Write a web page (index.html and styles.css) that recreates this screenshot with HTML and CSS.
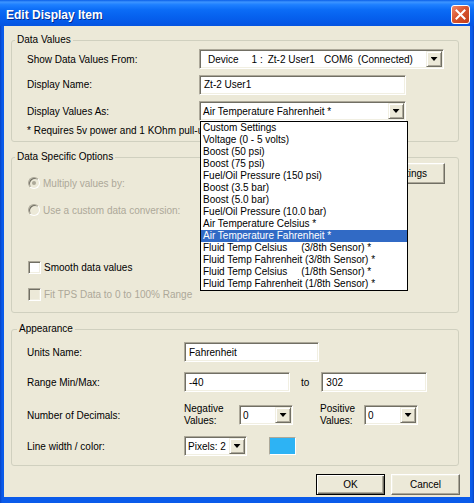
FILE: index.html
```
<!DOCTYPE html>
<html lang="en">

<head>
    <meta charset="UTF-8">
    <meta name="viewport" content="width=device-width, initial-scale=1.0">
    <title>Edit Display Item</title>
    <link rel="stylesheet" href="styles.css">
</head>

<body>
    <div class="window">
        <div class="titlebar">
            <span class="title">Edit Display Item</span>
            <button class="btn-close" title="Close">
                <svg width="11" height="11" viewBox="0 0 11 11">
                    <path d="M1.5 1.5l8 8M9.5 1.5l-8 8" stroke="#fff" stroke-width="2" stroke-linecap="square" />
                </svg>
            </button>
        </div>

        <div class="client">
            <!-- Data Values -->
            <fieldset class="group group-values">
                <legend>Data Values</legend>
                <div class="group-body">
                    <div class="row row-source">
                        <span class="label">Show Data Values From:</span>
                        <div class="field combo combo-source">
                            <span class="combo-text">
                                <span class="seg">Device</span><span class="seg seg-num">1 :</span><span class="seg seg-name">Zt-2 User1</span><span class="seg seg-port">COM6</span><span class="seg seg-state">(Connected)</span>
                            </span>
                            <span class="drop-btn"></span>
                        </div>
                    </div>
                    <div class="row row-name">
                        <span class="label">Display Name:</span>
                        <div class="field textbox textbox-name">Zt-2 User1</div>
                    </div>
                    <div class="row row-as">
                        <span class="label">Display Values As:</span>
                        <div class="field combo combo-as">
                            <span class="combo-text">Air Temperature Fahrenheit *</span>
                            <span class="drop-btn"></span>
                            <ul class="drop-list">
                                <li>Custom Settings</li>
                                <li>Voltage (0 - 5 volts)</li>
                                <li>Boost (50 psi)</li>
                                <li>Boost (75 psi)</li>
                                <li>Fuel/Oil Pressure (150 psi)</li>
                                <li>Boost (3.5 bar)</li>
                                <li>Boost (5.0 bar)</li>
                                <li>Fuel/Oil Pressure (10.0 bar)</li>
                                <li>Air Temperature Celsius *</li>
                                <li class="selected">Air Temperature Fahrenheit *</li>
                                <li>Fluid Temp Celsius     (3/8th Sensor) *</li>
                                <li>Fluid Temp Fahrenheit (3/8th Sensor) *</li>
                                <li>Fluid Temp Celsius     (1/8th Sensor) *</li>
                                <li>Fluid Temp Fahrenheit (1/8th Sensor) *</li>
                            </ul>
                        </div>
                    </div>
                    <div class="note">* Requires 5v power and 1 KOhm pull-up resistor</div>
                </div>
            </fieldset>

            <!-- Data Specific Options -->
            <fieldset class="group group-options">
                <legend>Data Specific Options</legend>
                <div class="group-body">
                    <div class="options">
                        <div class="opt opt-multiply disabled">
                            <span class="radio checked"></span>
                            <span>Multiply values by:</span>
                        </div>
                        <div class="opt opt-custom disabled">
                            <span class="radio"></span>
                            <span>Use a custom data conversion:</span>
                        </div>
                        <div class="opt opt-smooth">
                            <span class="check"></span>
                            <span>Smooth data values</span>
                        </div>
                        <div class="opt opt-fit disabled">
                            <span class="check"></span>
                            <span>Fit TPS Data to 0 to 100% Range</span>
                        </div>
                    </div>
                    <button class="btn btn-settings">Edit Settings</button>
                </div>
            </fieldset>

            <!-- Appearance -->
            <fieldset class="group group-appearance">
                <legend>Appearance</legend>
                <div class="group-body">
                    <div class="row row-units">
                        <span class="label">Units Name:</span>
                        <div class="field textbox textbox-units">Fahrenheit</div>
                    </div>
                    <div class="row row-range">
                        <span class="label">Range Min/Max:</span>
                        <div class="field textbox textbox-range">-40</div>
                        <span class="range-to">to</span>
                        <div class="field textbox textbox-range">302</div>
                    </div>
                    <div class="row row-decimals">
                        <span class="label">Number of Decimals:</span>
                        <span class="sublabel sublabel-neg">Negative<br>Values:</span>
                        <div class="field combo combo-small">
                            <span class="combo-text">0</span>
                            <span class="drop-btn"></span>
                        </div>
                        <span class="sublabel sublabel-pos">Positive<br>Values:</span>
                        <div class="field combo combo-small">
                            <span class="combo-text">0</span>
                            <span class="drop-btn"></span>
                        </div>
                    </div>
                    <div class="row row-line">
                        <span class="label">Line width / color:</span>
                        <div class="field combo combo-pixels">
                            <span class="combo-text">Pixels: 2</span>
                            <span class="drop-btn"></span>
                        </div>
                        <span class="swatch"></span>
                    </div>
                </div>
            </fieldset>

            <div class="actions">
                <button class="btn btn-default">OK</button>
                <button class="btn">Cancel</button>
            </div>
        </div>
    </div>
</body>

</html>
```

FILE: styles.css
```
:root {
    --face: #ECE9D8;
    --shadow: #ACA899;
    --dark: #716F64;
    --light: #F1EFE2;
    --frame: #D0D0BF;
    --xp-blue: #0A5BEA;
    --select: #316AC5;
}

* {
    box-sizing: border-box;
}

body {
    margin: 0;
    font-family: Tahoma, 'Liberation Sans', Arial, sans-serif;
    font-size: 10px;
    color: #000;
    background: var(--xp-blue);
}

.window {
    width: 474px;
    height: 503px;
    display: flex;
    flex-direction: column;
    background: linear-gradient(to right, #0843C4, var(--xp-blue) 2px, var(--xp-blue) calc(100% - 2px), #0843C4);
}

/* title bar */
.titlebar {
    height: 26px;
    flex: none;
    display: flex;
    align-items: center;
    justify-content: space-between;
    padding: 3px 4px 0 6px;
    background: linear-gradient(#0A5FE8 0%, #3D95FF 8%, #1E80FF 18%, #0B6CF6 38%, #0662EF 62%, #0559E8 85%, #0554E0 100%);
}

.title {
    color: white;
    font-weight: bold;
    font-size: 12px;
    font-family: 'Liberation Sans', Arial, sans-serif;
    text-shadow: 1px 1px 0 rgba(0, 0, 60, 0.55);
}

.btn-close {
    width: 19px;
    height: 19px;
    padding: 0;
    border: 1px solid white;
    border-radius: 3px;
    background: linear-gradient(135deg, #F08A6C, #D8552F 45%, #C23C18);
    display: flex;
    align-items: center;
    justify-content: center;
}

.client {
    flex: 1;
    margin: 0 4px 6px;
    padding: 0 11px 0 7px;
    background: var(--face);
    display: flex;
    flex-direction: column;
}

/* group boxes */
.group {
    margin: 0;
    padding: 0;
    min-width: 0;
    border: 1px solid var(--frame);
    border-radius: 3px;
}

.group legend {
    margin-left: 3px;
    padding: 0 2px;
    line-height: 14px;
}

.group-values {
    margin-top: 7px;
}

.group-options {
    margin-top: 8px;
}

.group-appearance {
    margin-top: 9px;
}

.group-appearance legend {
    margin-left: 5px;
}

.group-values .group-body {
    padding: 0 0 3px 15px;
}

.group-options .group-body {
    padding: 0 13px 8px 16px;
    display: flex;
    justify-content: space-between;
    align-items: flex-start;
}

.group-appearance .group-body {
    padding: 0 0 7px 15px;
}

.row {
    display: flex;
    align-items: center;
}

.label {
    flex: none;
    width: 172px;
}

.group-appearance .label {
    width: 157px;
}

.row-source {
    height: 24px;
}

.row-name {
    height: 27px;
}

.row-as {
    height: 26px;
}

.note {
    height: 14px;
    line-height: 14px;
    white-space: nowrap;
}

.row-units {
    height: 32px;
}

.row-range {
    height: 28px;
}

.row-decimals {
    height: 38px;
}

.row-line {
    height: 24px;
}

/* sunken edit / combo fields */
.field {
    position: relative;
    flex: none;
    height: 20px;
    background: white;
    border: 1px solid;
    border-color: var(--shadow) white white var(--shadow);
    box-shadow: inset 1px 1px 0 var(--dark), inset -1px -1px 0 var(--light);
    display: flex;
    align-items: center;
    white-space: nowrap;
}

.textbox {
    padding: 0 4px;
}

.combo {
    padding: 1px;
}

.combo-text {
    flex: 1;
    min-width: 0;
    padding-left: 2px;
    overflow: hidden;
}

.drop-btn {
    flex: none;
    width: 16px;
    height: 16px;
    background: var(--face);
    border: 1px solid;
    border-color: var(--light) var(--dark) var(--dark) var(--light);
    box-shadow: inset 1px 1px 0 white, inset -1px -1px 0 var(--shadow);
    display: flex;
    align-items: center;
    justify-content: center;
}

.drop-btn::after {
    content: "";
    width: 7px;
    height: 4px;
    background: #000;
    clip-path: polygon(0 0, 100% 0, 50% 100%);
}

.combo-source {
    width: 245px;
}

.combo-source .combo-text {
    padding-left: 7px;
}

.seg-num {
    margin-left: 13px;
}

.seg-name {
    margin-left: 5px;
}

.seg-port {
    margin-left: 9px;
}

.seg-state {
    margin-left: 5px;
}

.textbox-name,
.combo-as {
    width: 207px;
}

.textbox-units {
    width: 135px;
}

.textbox-range {
    width: 106px;
}

.range-to {
    margin: 0 12px 0 11px;
}

.sublabel {
    flex: none;
    line-height: 12px;
}

.sublabel-neg {
    width: 55px;
}

.sublabel-pos {
    width: 44px;
    margin-left: 27px;
}

.combo-small {
    width: 54px;
}

.combo-pixels {
    width: 63px;
}

.swatch {
    width: 27px;
    height: 18px;
    margin-left: 22px;
    background: #2DB3F4;
    border: 1px solid;
    border-color: var(--shadow) white white var(--shadow);
}

/* open dropdown list */
.drop-list {
    position: absolute;
    top: calc(100% + 1px);
    left: 0;
    z-index: 10;
    width: 208px;
    margin: 0;
    padding: 0;
    list-style: none;
    background: white;
    border: 1px solid #000;
}

.drop-list li {
    height: 12px;
    line-height: 12px;
    padding-left: 2px;
    white-space: pre;
}

.drop-list li.selected {
    background: var(--select);
    color: white;
}

/* radio buttons and check boxes */
.options {
    padding-top: 8px;
}

.opt {
    display: flex;
    align-items: center;
    gap: 3px;
}

.opt.disabled {
    color: var(--shadow);
}

.opt-multiply {
    height: 22px;
}

.opt-custom {
    height: 32px;
}

.opt-smooth {
    height: 20px;
    margin-top: 31px;
}

.opt-fit {
    height: 20px;
    margin-top: 7px;
}

.radio {
    width: 12px;
    height: 12px;
    border-radius: 50%;
    border: 1px solid;
    border-color: var(--shadow) white white var(--shadow);
    box-shadow: inset 1px 1px 0 var(--dark);
    background: var(--face);
    display: flex;
    align-items: center;
    justify-content: center;
}

.radio.checked::after {
    content: "";
    width: 4px;
    height: 4px;
    border-radius: 50%;
    background: var(--shadow);
}

.check {
    width: 13px;
    height: 13px;
    border: 1px solid;
    border-color: var(--shadow) white white var(--shadow);
    box-shadow: inset 1px 1px 0 var(--dark), inset -1px -1px 0 var(--light);
    background: white;
}

.opt.disabled .check {
    background: var(--face);
}

/* push buttons */
.btn {
    font: inherit;
    color: #000;
    width: 69px;
    height: 21px;
    padding: 0;
    background: var(--face);
    border: 1px solid;
    border-color: white var(--dark) var(--dark) white;
    box-shadow: inset -1px -1px 0 var(--shadow), inset 1px 1px 0 var(--light);
}

.btn-default {
    border-color: #000;
    box-shadow: inset 1px 1px 0 white, inset -1px -1px 0 var(--dark), inset -2px -2px 0 var(--shadow);
}

.btn-settings {
    width: 92px;
    margin-top: -1px;
}

.actions {
    display: flex;
    justify-content: flex-end;
    gap: 6px;
    margin: 8px -1px 0 0;
}
```
